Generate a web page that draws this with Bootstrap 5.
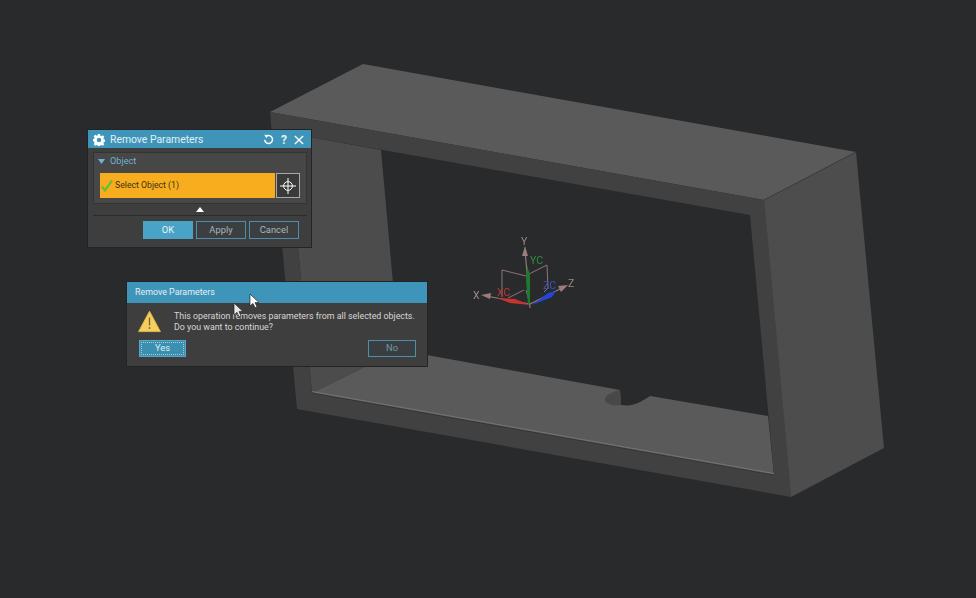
<!DOCTYPE html>
<html lang="en">
<head>
<meta charset="UTF-8">
<title>Remove Parameters</title>
<link href="https://cdn.jsdelivr.net/npm/bootstrap@5.3.0/dist/css/bootstrap.min.css" rel="stylesheet">
<style>
body { background: #292a2c; font-family: Roboto, "Noto Sans", sans-serif; overflow: hidden; }
.viewport { position: relative; width: 976px; height: 598px; overflow: hidden; }
.scene { position: absolute; left: 0; top: 0; filter: blur(.3px); }
.gizmo-text { font-family: Roboto, sans-serif; font-size: 10.5px; }

/* windows floating over the model */
.win { position: absolute; background: #3e3e3e; border: 1px solid #232425; border-radius: 0; color: #d8d8d8; }
.win-param { left: 87px; top: 129px; width: 225px; height: 119px; }
.win-confirm { left: 126px; top: 281px; width: 302px; height: 86px; }
.win .win-bar { background: #3f95b9; color: #e2eff5; border: 0; border-radius: 0; padding: 0; }
.win-param .win-bar { height: 18px; padding: 1px 7px 0 5px; font-size: 10.4px; }
.win-confirm .win-bar { height: 21px; padding: 1px 8px 0; font-size: 8.9px; }
.bar-title { margin-left: 5px; }
.win-confirm .bar-title { margin-left: 0; }
.bar-tools { margin-left: auto; gap: 7px; font-size: 12px; font-weight: 700; }

.param-body { padding: 4px 4px 0 5px; }
.group-box { height: 52px; background: #474747; border: 1px solid #333; padding: 0 6px; }
.group-head { height: 20px; padding-bottom: 4px; margin-left: -2px; font-size: 9.2px; color: #6fb3cf; gap: 5px; }
.sel-row { gap: 1px; }
.sel-field { width: 175px; height: 25px; background: #f8ad1e; color: #3a3118; font-size: 8.7px; padding-left: 1px; gap: 2px; }
.sel-btn { width: 24px; height: 25px; background: #3a3a3a; border: 1px solid #a9a9a9; }
.more-row { height: 11px; }
.more-arrow { width: 0; height: 0; border-left: 4px solid transparent; border-right: 4px solid transparent; border-bottom: 5px solid #fff; }
.win-rule { border-top: 1px solid #2b2b2b; }

.act-btn { width: 50px; height: 18px; padding: 0; border-radius: 0; border: 1px solid #4f8ea8; background: #3c3f41; color: #a9b5ba; font-size: 9.4px; line-height: 1; }
.act-btn:hover { background: #3c3f41; border-color: #4f8ea8; color: #a9b5ba; }
.act-main, .act-main:hover { background: #48a3c6; border-color: #48a3c6; color: #e9f4f8; }
.act-row { gap: 3px; padding: 5px 8px 0 0; }

.confirm-body { padding: 7px 11px 0 11px; gap: 13px; }
.confirm-msg { font-size: 8.85px; line-height: 11.3px; color: #d6d6d6; margin-top: 1px; white-space: nowrap; }
.confirm-acts { padding: 6px 11px 0 12px; }
.act-yes, .act-yes:hover { width: 47px; height: 17px; background: #3d8fb0; border: 1px solid #56a8c8; outline: 1px dotted #9fd0e2; outline-offset: -3px; color: #d8edf5; }
.act-no, .act-no:hover { width: 48px; height: 17px; color: #6f98a8; background: #3b3e40; }
.pointer { position: absolute; }
</style>
</head>
<body>
<div class="viewport">

  <!-- model -->
  <svg class="scene" width="976" height="598" viewBox="0 0 976 598">
    <polygon points="363,64 856,152 764,200 270,112" fill="#5a5a5a"/>
    <polygon points="287,133 381,150 399,350 312,393" fill="#4c4c4c"/>
    <path d="M312,393 399,350 620,390 621,405 C635,407 642,401 650,396 L768,416 774,475Z" fill="#5a5a5a"/>
    <path d="M620,390 C612,392 604,396 605,400 C606,404 612,406 621,405 Z" fill="#484848"/>
    <path fill-rule="evenodd" d="M270,112 764,200 791,497 297,409 Z M287,133 750,215 774,475 312,393 Z" fill="#414141"/>
    <polygon points="764,200 856,152 884,448 791,497" fill="#4d4d4d"/>
    <path d="M312,391.5 774,473.5" stroke="#7a7a7a" stroke-width=".8" fill="none"/>
    <path d="M312,393 774,475" stroke="#333" stroke-width=".7" fill="none"/>
    <path d="M764,200 856,152" stroke="#333" stroke-width=".6" fill="none"/>
    <path d="M764,200 791,497" stroke="#484848" stroke-width=".6" fill="none"/>

    <!-- work coordinate system -->
    <g fill="none" stroke="#9b7d7d" stroke-width=".9">
      <path d="M502,270 L502,297 M502,270 L526,276 M547,265 L548,288 M547,265 L529,274 M508,298 L524,290 M530,304 L526,290 M548,288 L544,292"/>
      <path d="M530,308 L525,250" stroke-width="1.1"/>
      <path d="M530,304 L486,296" stroke-width="1.1"/>
      <path d="M530,304 L564,287" stroke-width="1.1"/>
    </g>
    <polygon points="525,246 522,256 528,256" fill="#9b7d7d"/>
    <polygon points="481,295 491,293 490,299" fill="#9b7d7d"/>
    <polygon points="568,285 558,286 561,292" fill="#9b7d7d"/>
    <polygon points="527,265 530,275 530,304 528,304 526,280" fill="#1f7a2e"/>
    <polygon points="497,298 515,299 530,305 510,303" fill="#c8322f"/>
    <polygon points="532,305 548,293 556,291 552,297" fill="#2446d8"/>
    <g class="gizmo-text">
      <text x="521" y="245" fill="#9b8a8a">Y</text>
      <text x="530" y="264" fill="#2f8f3f">YC</text>
      <text x="473" y="299" fill="#9b8a8a">X</text>
      <text x="497" y="296" fill="#b33a3a">XC</text>
      <text x="543" y="289" fill="#3b55c8">ZC</text>
      <text x="568" y="287" fill="#9b8a8a">Z</text>
    </g>
  </svg>

  <!-- Remove Parameters dialog -->
  <div class="win win-param card">
    <div class="win-bar card-header d-flex align-items-center">
      <svg width="12" height="12" viewBox="0 0 16 16"><path fill="#fff" fill-rule="evenodd" d="M6.6 0h2.8l.4 2.3 1.3.6 2-1.3 2 2-1.3 2 .6 1.3 2.1.4v2.8l-2.1.4-.6 1.3 1.3 2-2 2-2-1.3-1.3.6-.4 2.2H6.6l-.4-2.2-1.3-.6-2 1.3-2-2 1.3-2-.6-1.3L0 9.4V6.6l1.6-.4.6-1.3-1.3-2 2-2 2 1.3 1.3-.6zM8 5a3 3 0 1 0 0 6 3 3 0 0 0 0-6z"/></svg>
      <span class="bar-title">Remove Parameters</span>
      <div class="bar-tools d-flex align-items-center">
        <svg width="11" height="11" viewBox="0 0 12 12"><path d="M3.4 2.6A4.3 4.3 0 1 1 1.8 6.5" fill="none" stroke="#fff" stroke-width="1.6"/><path d="M1.5 .8 5.6 1 3.6 4.6z" fill="#fff"/></svg>
        <span>?</span>
        <svg width="10" height="10" viewBox="0 0 11 11"><path d="M1 1l9 9M10 1l-9 9" stroke="#fff" stroke-width="1.6"/></svg>
      </div>
    </div>
    <div class="param-body">
      <div class="group-box">
        <div class="group-head d-flex align-items-center">
          <span class="d-inline-block"><svg class="d-block" width="7" height="5" viewBox="0 0 7 5"><path d="M0 0h7L3.5 5z" fill="#6fb3cf"/></svg></span>
          <span>Object</span>
        </div>
        <div class="sel-row d-flex">
          <div class="sel-field d-flex align-items-center">
            <svg width="12" height="13" viewBox="0 0 12 13"><path d="M1 7.5 4 11.5 11 1.5" fill="none" stroke="#6dbb3a" stroke-width="2.2"/></svg>
            <span>Select Object (1)</span>
          </div>
          <div class="sel-btn d-flex align-items-center justify-content-center">
            <svg width="16" height="16" viewBox="0 0 16 16"><circle cx="8" cy="8" r="4.4" fill="none" stroke="#fff" stroke-width="1"/><path d="M8 0v16M0 8h16" stroke="#fff" stroke-width="1"/></svg>
          </div>
        </div>
      </div>
      <div class="more-row d-flex align-items-center justify-content-center"><div class="more-arrow"></div></div>
      <div class="win-rule"></div>
      <div class="act-row d-flex justify-content-end">
        <button type="button" class="btn act-btn act-main">OK</button>
        <button type="button" class="btn act-btn">Apply</button>
        <button type="button" class="btn act-btn">Cancel</button>
      </div>
    </div>
  </div>

  <!-- confirmation message -->
  <div class="win win-confirm card">
    <div class="win-bar card-header d-flex align-items-center"><span class="bar-title">Remove Parameters</span></div>
    <div class="confirm-body d-flex">
      <svg class="flex-shrink-0" width="23" height="23" viewBox="0 0 23 23"><path d="M11.5 1.2 22.4 21.6H.6z" fill="#f3cf62" stroke="#e2b540" stroke-width="1" stroke-linejoin="round"/><path d="M11.5 7.5v8" stroke="#7a6420" stroke-width="1.3"/><circle cx="11.5" cy="18" r=".9" fill="#7a6420"/></svg>
      <div class="confirm-msg">This operation removes parameters from all selected objects.<br>Do you want to continue?</div>
    </div>
    <div class="confirm-acts d-flex justify-content-between">
      <button type="button" class="btn act-btn act-yes">Yes</button>
      <button type="button" class="btn act-btn act-no">No</button>
    </div>
  </div>

  <!-- mouse pointers -->
  <svg class="pointer" style="left:249px;top:293px" width="11" height="16" viewBox="0 0 11 16"><path d="M1 1v12l3-2.6 2 4.4 2-.9-2-4.3h4z" fill="#fff" stroke="#222" stroke-width=".7"/></svg>
  <svg class="pointer" style="left:233px;top:302px" width="11" height="16" viewBox="0 0 11 16"><path d="M1 1v12l3-2.6 2 4.4 2-.9-2-4.3h4z" fill="#e8e8e8" stroke="#222" stroke-width=".7"/></svg>
</div>
<script src="https://cdn.jsdelivr.net/npm/bootstrap@5.3.0/dist/js/bootstrap.bundle.min.js"></script>
</body>
</html>
